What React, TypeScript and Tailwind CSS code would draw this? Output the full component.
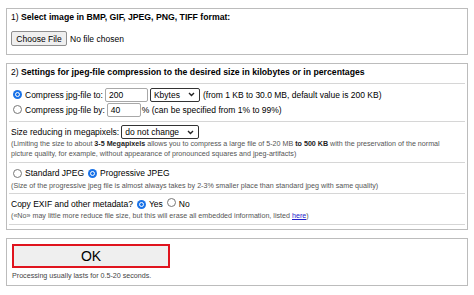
import React from 'react';

const Radio: React.FC<{ checked?: boolean }> = ({ checked }) =>
  checked ? (
    <span className="inline-flex w-[9px] h-[9px] rounded-full bg-[#1a73e8] items-center justify-center shrink-0">
      <span className="w-[5px] h-[5px] rounded-full border-[1.5px] border-white bg-[#1a73e8]" />
    </span>
  ) : (
    <span className="inline-block w-[9px] h-[9px] rounded-full border border-[#777] bg-white shrink-0" />
  );

const Select: React.FC<{ label: string; w: string }> = ({ label, w }) => (
  <span className={`inline-flex items-center justify-between h-[14px] border border-[#333] rounded-[2px] px-[3px] bg-white ${w}`}>
    <span>{label}</span>
    <svg width="7" height="5" viewBox="0 0 7 5" className="mr-[1px]">
      <path d="M1 1 L3.5 3.5 L6 1" stroke="#222" strokeWidth="1.4" fill="none" />
    </svg>
  </span>
);

const Sep = () => <div className="mx-[2px] h-px bg-[#d6d6d6]" />;

export default function App() {
  return (
    <div className="w-[474px] h-[295px] bg-white text-black text-[8.5px] leading-[12px] font-['Liberation_Sans',Arial,sans-serif] px-[6px] pt-[8px]">
      <div className="w-[462px] h-[47px] border border-[#bcbcbc] px-[4px] pt-[2px]">
        <div>1) <b className="text-[8.7px]">Select image in BMP, GIF, JPEG, PNG, TIFF format:</b></div>
        <div className="mt-[8px] flex items-center gap-[3px]">
          <span className="h-[15px] w-[56px] flex items-center justify-center border border-[#8f8f8f] rounded-[2px] bg-[#efefef]">Choose File</span>
          <span>No file chosen</span>
        </div>
      </div>

      <div className="mt-[8px] w-[462px] h-[167px] border border-[#bcbcbc] pt-[2px]">
        <div className="px-[4px]">2) <b className="text-[8.7px]">Settings for jpeg-file compression to the desired size in kilobytes or in percentages</b></div>
        <div className="mt-[5px]"><Sep /></div>
        <div className="px-[6px] pt-[3px]">
          <div className="h-[15px] flex items-center">
            <Radio checked />
            <span className="ml-[3px]">Compress jpg-file to:</span>
            <span className="ml-[2px] w-[43px] h-[14px] border border-[#a8a8a8] rounded-[2px] px-[3px] flex items-center">200</span>
            <span className="ml-[2px]"><Select label="Kbytes" w="w-[50px]" /></span>
            <span className="ml-[3px]">(from 1 KB to 30.0 MB, default value is 200 KB)</span>
          </div>
          <div className="h-[15px] flex items-center">
            <Radio />
            <span className="ml-[3px]">Compress jpg-file by:</span>
            <span className="ml-[2px] w-[34px] h-[14px] border border-[#a8a8a8] rounded-[2px] px-[3px] flex items-center">40</span>
            <span className="ml-[1px]">% (can be specified from 1% to 99%)</span>
          </div>
        </div>
        <div className="mt-[4px]"><Sep /></div>
        <div className="px-[4px] pt-[3px]">
          <div className="h-[14px] flex items-center">
            <span>Size reducing in megapixels:</span>
            <span className="ml-[2px]"><Select label="do not change" w="w-[78px]" /></span>
          </div>
          <div className="text-[7.15px] leading-[10px] text-[#555]">
            (Limiting the size to about <b className="text-[#222]">3-5 Megapixels</b> allows you to compress a large file of 5-20 MB <b className="text-[#222]">to 500 KB</b> with the preservation of the normal picture quality, for example, without appearance of pronounced squares and jpeg-artifacts)
          </div>
        </div>
        <div className="mt-[3px]"><Sep /></div>
        <div className="px-[4px] pt-[4px]">
          <div className="h-[12px] flex items-center pl-[2px]">
            <Radio />
            <span className="ml-[3px]">Standard JPEG</span>
            <span className="ml-[4px]"><Radio checked /></span>
            <span className="ml-[3px]">Progressive JPEG</span>
          </div>
          <div className="text-[7.15px] leading-[10px] text-[#555] mt-[2px]">
            (Size of the progressive jpeg file is almost always takes by 2-3% smaller place than standard jpeg with same quality)
          </div>
        </div>
        <div className="mt-[2px]"><Sep /></div>
        <div className="px-[4px] pt-[4px]">
          <div className="h-[12px] flex items-center">
            <span>Copy EXIF and other metadata?</span>
            <span className="ml-[4px]"><Radio checked /></span>
            <span className="ml-[3px]">Yes</span>
            <span className="ml-[4px]"><Radio /></span>
            <span className="ml-[3px]">No</span>
          </div>
          <div className="text-[7.15px] leading-[10px] text-[#555] mt-[1px]">
            («No» may little more reduce file size, but this will erase all embedded information, listed <span className="text-[#2222cc] underline">here</span>)
          </div>
        </div>
        <div className="mt-[3px]"><Sep /></div>
      </div>

      <div className="mt-[8px] w-[462px] h-[48px] border border-[#bcbcbc] px-[5px] pt-[5px]">
        <div className="w-[158px] h-[24px] border-2 border-[#e0141e] bg-[#efefef] flex items-center justify-center text-[14px]">OK</div>
        <div className="mt-[3px] text-[7.15px] leading-[10px] text-[#444]">Processing usually lasts for 0.5-20 seconds.</div>
      </div>
    </div>
  );
}
